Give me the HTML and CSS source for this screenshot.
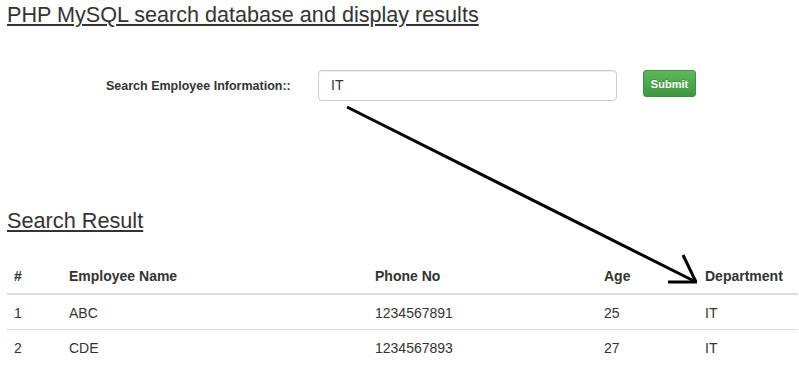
FILE: index.html
```html
<!DOCTYPE html>
<html>
<head>
<meta charset="utf-8">
<link rel="stylesheet" href="styles.css">
</head>
<body>
<div class="page">
  <h1 class="title">PHP MySQL search database and display results</h1>
  <form class="search-row">
    <label class="search-label">Search Employee Information::</label>
    <div class="search-input">IT</div>
    <button type="button" class="btn-submit">Submit</button>
  </form>
  <h2 class="result-title">Search Result</h2>
  <table class="results">
    <thead>
      <tr><th class="c-num">#</th><th class="c-name">Employee Name</th><th class="c-phone">Phone No</th><th class="c-age">Age</th><th class="c-dept">Department</th></tr>
    </thead>
    <tbody>
      <tr><td>1</td><td>ABC</td><td>1234567891</td><td>25</td><td>IT</td></tr>
      <tr><td>2</td><td>CDE</td><td>1234567893</td><td>27</td><td>IT</td></tr>
    </tbody>
  </table>
</div>
<svg class="annotation" width="799" height="367" viewBox="0 0 799 367">
  <line x1="347" y1="107" x2="696" y2="282" stroke="#000" stroke-width="3"/>
  <line x1="683" y1="255" x2="696" y2="282" stroke="#000" stroke-width="3"/>
  <line x1="668" y1="282" x2="697" y2="282" stroke="#000" stroke-width="3"/>
</svg>
</body>
</html>
```
FILE: styles.css
```css
html, body {
  margin: 0;
  padding: 0;
  background: #fff;
  overflow: hidden;
}
body {
  font-family: "Liberation Sans", Arial, sans-serif;
  color: #333;
  font-size: 14px;
  line-height: 20px;
  position: relative;
  width: 799px;
  height: 367px;
}
.page {
  padding: 2px 0 0 7px;
}
.title {
  margin: 0;
  font-size: 21.6px;
  font-weight: normal;
  line-height: 26px;
  text-decoration: underline;
  text-underline-offset: 2px;
}
.search-row {
  display: flex;
  align-items: center;
  margin: 42px 0 0 99px;
  height: 31px;
}
.search-label {
  font-size: 12.5px;
  font-weight: bold;
  width: 184px;
  flex: none;
  white-space: nowrap;
}
.search-input {
  margin-left: 28px;
  width: 285px;
  height: 29px;
  border: 1px solid #ccc;
  border-radius: 4px;
  padding: 0 0 0 12px;
  font-size: 14px;
  line-height: 29px;
  box-shadow: inset 0 1px 1px rgba(0,0,0,.075);
}
.btn-submit {
  margin-left: 26px;
  margin-top: -4px;
  width: 53px;
  height: 27px;
  padding: 0;
  border: 1px solid #3e8f3e;
  border-radius: 3px;
  background: linear-gradient(to bottom, #5cb85c 0, #419641 100%);
  color: #fff;
  font-family: "Liberation Sans", Arial, sans-serif;
  font-size: 11px;
  font-weight: bold;
  text-shadow: 0 -1px 0 rgba(0,0,0,.2);
}
.result-title {
  margin: 107px 0 0 0;
  font-size: 21.7px;
  font-weight: normal;
  line-height: 26px;
  text-decoration: underline;
  text-underline-offset: 2px;
}
.results {
  margin-top: 24px;
  width: 791px;
  border-collapse: collapse;
}
.results th, .results td {
  text-align: left;
  padding: 8px 7px 6px 7px;
  vertical-align: top;
}
.results th {
  font-weight: bold;
  padding-bottom: 7px;
  border-bottom: 2px solid #ddd;
}
.results td {
  border-top: 1px solid #ddd;
}
.results tbody tr:first-child td {
  border-top: 0;
}
.c-num { width: 41px; }
.c-name { width: 292px; }
.c-phone { width: 215px; }
.c-age { width: 87px; }
.annotation {
  position: absolute;
  left: 0;
  top: 0;
  pointer-events: none;
}
```
